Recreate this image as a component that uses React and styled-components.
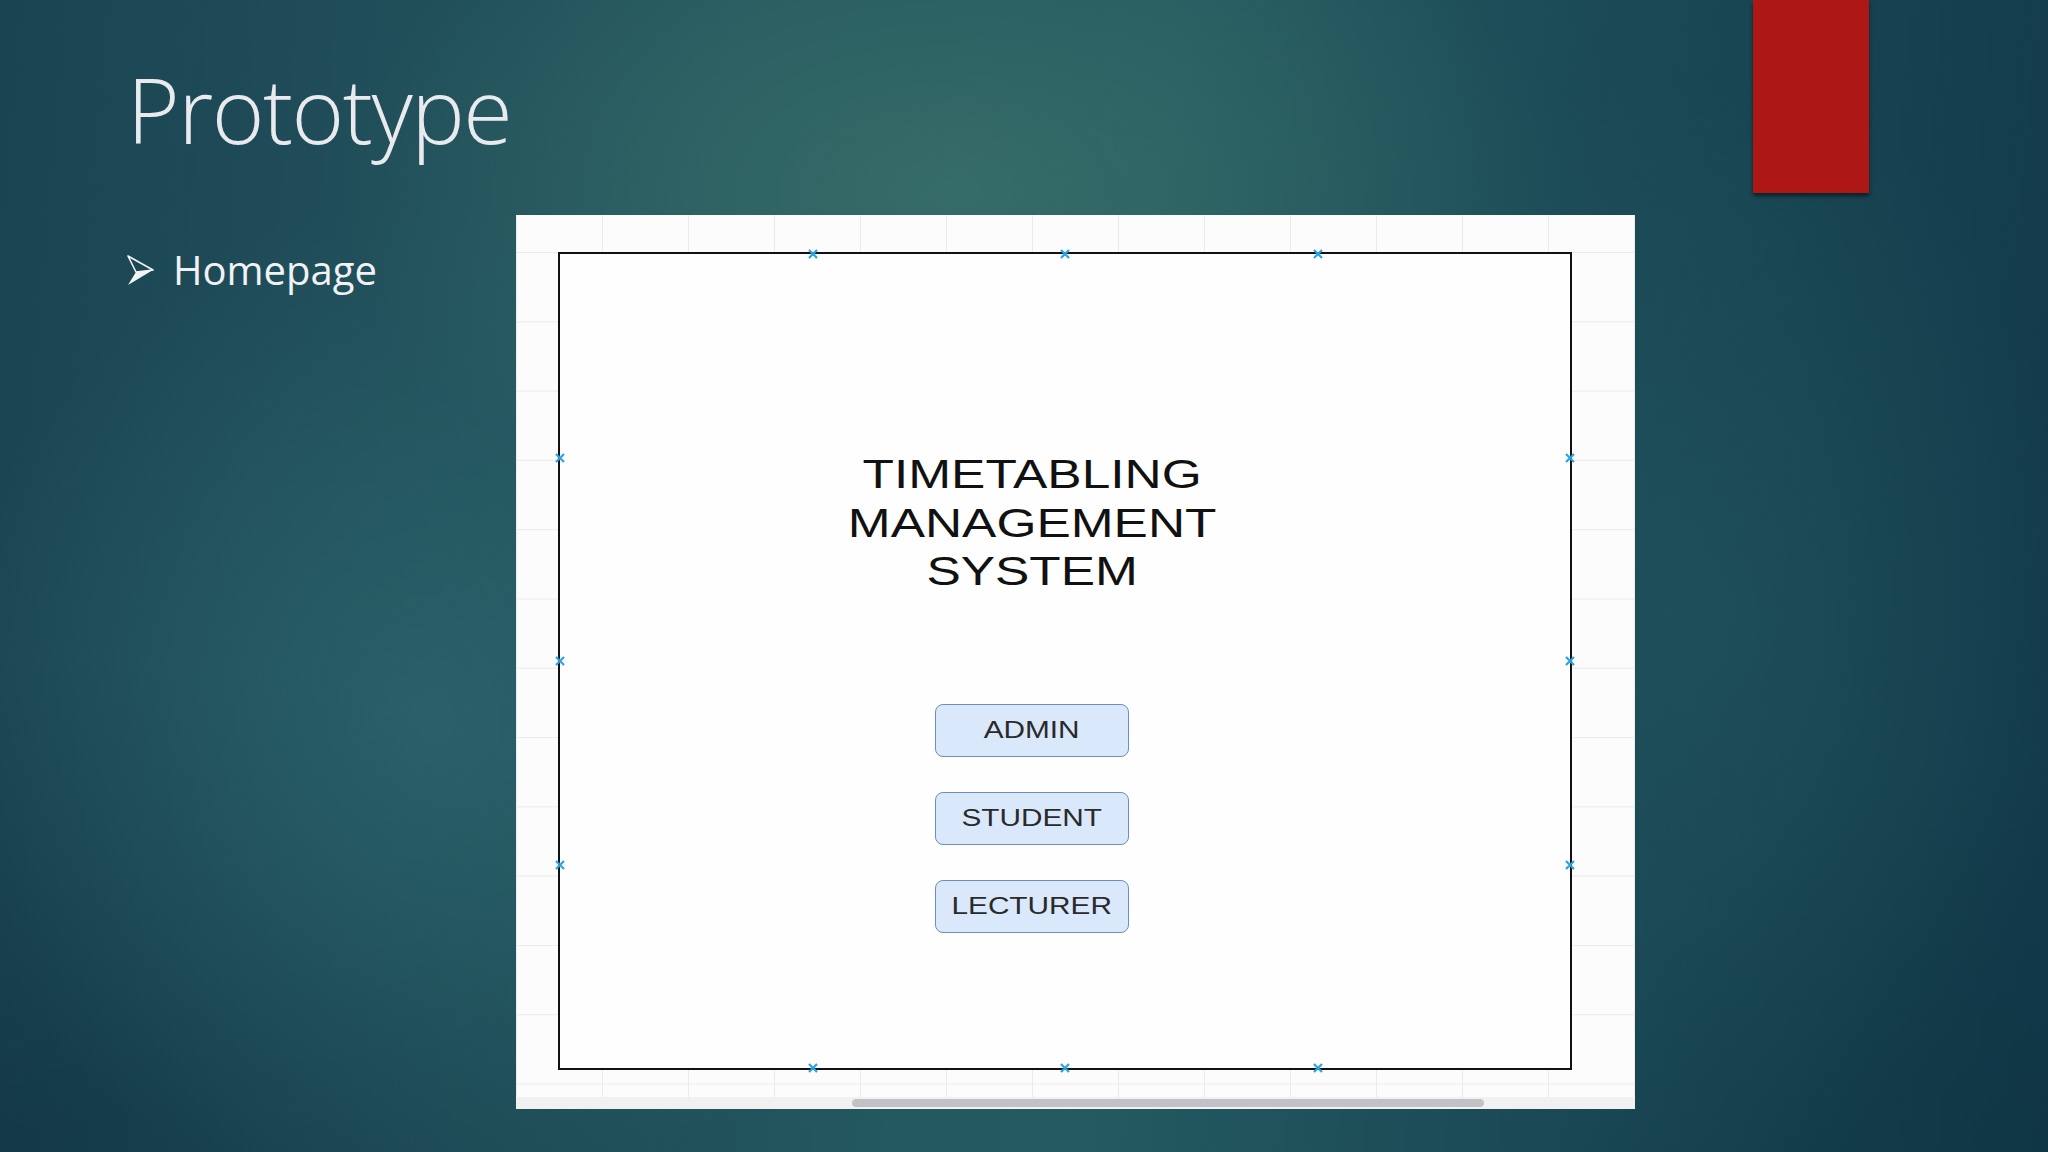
import React from 'react'
import styled, { createGlobalStyle } from 'styled-components'

const GlobalStyle = createGlobalStyle`
  html, body {
    margin: 0;
    padding: 0;
    overflow: hidden;
    background: #1c4753;
  }
`

const Slide = styled.div`
  position: relative;
  width: 2048px;
  height: 1152px;
  overflow: hidden;
  box-sizing: border-box;
  padding: 64px 0 0 127px;
  font-family: 'Open Sans', 'Noto Sans', sans-serif;
  background:
    radial-gradient(ellipse 620px 360px at 950px 190px, rgba(58, 112, 106, 0.8), rgba(58, 112, 106, 0) 100%),
    radial-gradient(ellipse 480px 520px at 430px 720px, rgba(44, 102, 110, 0.75), rgba(44, 102, 110, 0) 100%),
    radial-gradient(ellipse 380px 560px at 1700px 620px, rgba(36, 88, 96, 0.5), rgba(36, 88, 96, 0) 100%),
    radial-gradient(ellipse 900px 500px at 0px 1152px, rgba(16, 52, 68, 0.7), rgba(16, 52, 68, 0) 100%),
    radial-gradient(ellipse 500px 400px at 2048px 1152px, rgba(14, 52, 66, 0.6), rgba(14, 52, 66, 0) 100%),
    linear-gradient(95deg, #1b4453 0%, #24575f 35%, #245a60 55%, #1b4a56 75%, #12394a 100%);
`

const Accent = styled.div`
  position: absolute;
  left: 1753px;
  top: 0;
  width: 116px;
  height: 193px;
  background: #ad1716;
  box-shadow: 0 3px 4px rgba(0, 0, 0, 0.55);
`

const Title = styled.h1`
  margin: 0;
  font-size: 90px;
  line-height: 90px;
  font-weight: 300;
  color: #e9eaee;
  letter-spacing: -1.5px;
`

const Body = styled.div`
  display: flex;
  margin-top: 61px;
`

const BulletColumn = styled.div`
  width: 389px;
  padding-top: 35px;
`

const Bullet = styled.div`
  display: flex;
  align-items: center;
  gap: 19px;
  font-size: 40px;
  line-height: 40px;
  color: #f1f2f4;
`

const Panel = styled.div`
  display: flex;
  flex-direction: column;
  width: 1119px;
  height: 894px;
  box-sizing: border-box;
  background-color: #fcfcfc;
  background-image:
    linear-gradient(to right, #ebebeb 1px, transparent 1px),
    linear-gradient(to bottom, #ebebeb 1px, transparent 1px);
  background-size: 86px 69.3px;
  background-position: 0 37px;
`

const Canvas = styled.div`
  flex: 1;
  padding: 37px 63px 27px 42px;
`

const Frame = styled.div`
  position: relative;
  display: flex;
  flex-direction: column;
  align-items: center;
  box-sizing: border-box;
  height: 818px;
  padding: 196px 66px 0 0;
  background: #fefefe;
  border: 2px solid #111;
`

const Marker = styled.svg`
  position: absolute;
  width: 12px;
  height: 12px;
  margin: -6px 0 0 -6px;
  left: ${p => p.$x};
  top: ${p => p.$y};
`

const Heading = styled.div`
  font-family: 'Liberation Sans', Arial, sans-serif;
  font-size: 40.5px;
  line-height: 48.5px;
  color: #111;
  text-align: center;
  transform: scaleX(1.27);
`

const Buttons = styled.div`
  display: flex;
  flex-direction: column;
  gap: 35px;
  margin-top: 108px;
`

const Button = styled.div`
  display: flex;
  align-items: center;
  justify-content: center;
  width: 194px;
  height: 53px;
  box-sizing: border-box;
  background: #dae8fc;
  border: 1.5px solid #6c8ebf;
  border-radius: 8px;
`

const ButtonLabel = styled.span`
  font-family: 'Liberation Sans', Arial, sans-serif;
  font-size: 24px;
  color: #2a2a2a;
  transform: scaleX(1.24);
`

const ScrollTrack = styled.div`
  height: 12px;
  background: #f1f1f2;
`

const ScrollThumb = styled.div`
  width: 632px;
  height: 8px;
  margin: 2px 0 0 336px;
  border-radius: 4px;
  background: #c2c2c6;
`

const ArrowIcon = () => (
  <svg width="27" height="31" viewBox="0 0 27 31">
    <path d="M1 1 L26 15 L9 17 Z" fill="none" stroke="#f4f4f6" strokeWidth="1.6" strokeLinejoin="round" />
    <path d="M9 17 L26 15 L1 30 Z" fill="#f4f4f6" />
  </svg>
)

const Cross = ({ x, y }) => (
  <Marker $x={x} $y={y} viewBox="0 0 12 12">
    <path d="M2 2 L10 10 M10 2 L2 10" stroke="#2ba3e2" strokeWidth="2.2" />
  </Marker>
)

const markers = [
  ['25%', '0%'], ['50%', '0%'], ['75%', '0%'],
  ['25%', '100%'], ['50%', '100%'], ['75%', '100%'],
  ['0%', '25%'], ['0%', '50%'], ['0%', '75%'],
  ['100%', '25%'], ['100%', '50%'], ['100%', '75%'],
]

const App = () => {
  return (
    <>
      <GlobalStyle />
      <Slide>
        <Accent />
        <Title>Prototype</Title>
        <Body>
          <BulletColumn>
            <Bullet>
              <ArrowIcon />
              <span>Homepage</span>
            </Bullet>
          </BulletColumn>
          <Panel>
            <Canvas>
              <Frame>
                {markers.map(([x, y]) => (
                  <Cross key={x + y} x={x} y={y} />
                ))}
                <Heading>
                  TIMETABLING
                  <br />
                  MANAGEMENT
                  <br />
                  SYSTEM
                </Heading>
                <Buttons>
                  <Button><ButtonLabel>ADMIN</ButtonLabel></Button>
                  <Button><ButtonLabel>STUDENT</ButtonLabel></Button>
                  <Button><ButtonLabel>LECTURER</ButtonLabel></Button>
                </Buttons>
              </Frame>
            </Canvas>
            <ScrollTrack>
              <ScrollThumb />
            </ScrollTrack>
          </Panel>
        </Body>
      </Slide>
    </>
  )
}

export default App
